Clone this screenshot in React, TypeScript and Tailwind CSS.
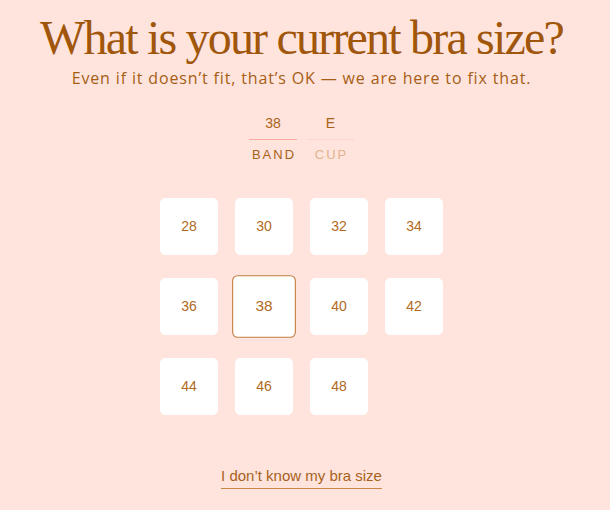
import React, { useState } from 'react';

const bands = [28, 30, 32, 34, 36, 38, 40, 42, 44, 46, 48];

export default function App() {
  const [band, setBand] = useState(38);
  const [tab, setTab] = useState<'band' | 'cup'>('band');

  return (
    <div className="min-h-[510px] w-full bg-[#ffe4de] pr-[7px] flex flex-col items-center font-['Liberation_Sans',Arial,sans-serif]">
      {/* Heading */}
      <h1 className="mt-[14px] text-[48px] leading-none tracking-[-1.8px] text-[#a0560b] font-['Liberation_Serif','Times_New_Roman',serif]">
        What is your current bra size?
      </h1>
      <p className="mt-[4px] text-[16px] leading-6 tracking-[0.85px] font-medium text-[#a65e14] font-['Open_Sans',Arial,sans-serif]">
        Even if it doesn’t fit, that’s OK — we are here to fix that.
      </p>

      {/* Band / cup tabs */}
      <div className="mt-[23px] flex gap-[10px]">
        <button
          type="button"
          onClick={() => setTab('band')}
          className="w-[48px] flex flex-col items-center"
        >
          <span className="w-full text-center text-[14px] leading-5 text-[#a86218] pb-[6px] border-b border-[#f6ab9b]">
            {band}
          </span>
          <span className={`mt-[5px] text-[13px] leading-5 tracking-[2px] pl-[2px] ${tab === 'band' ? 'text-[#a86218]' : 'text-[#e0b48c]'}`}>
            BAND
          </span>
        </button>
        <button
          type="button"
          onClick={() => setTab('cup')}
          className="w-[47px] flex flex-col items-center"
        >
          <span className="w-full text-center text-[14px] leading-5 text-[#a86218] pb-[6px] border-b border-[#fbd6cc]">
            E
          </span>
          <span className={`mt-[5px] text-[13px] leading-5 tracking-[2px] pl-[2px] ${tab === 'cup' ? 'text-[#a86218]' : 'text-[#e0b48c]'}`}>
            CUP
          </span>
        </button>
      </div>

      {/* Size grid */}
      <div className="mt-[33px] grid grid-cols-[repeat(4,58px)] auto-rows-[57px] gap-x-[17px] gap-y-[23px]">
        {bands.map((b) => (
          <button
            key={b}
            type="button"
            onClick={() => setBand(b)}
            className={`flex items-center justify-center rounded-[5px] bg-white text-[14px] text-[#b06a24] ${
              band === b ? 'scale-110 border-[1.5px] border-[#c27c3e]' : 'border-[1.5px] border-white'
            }`}
          >
            {b}
          </button>
        ))}
      </div>

      {/* Link */}
      <button
        type="button"
        className="mt-[51px] text-[15px] leading-5 text-[#a8621a] pb-[2px] border-b border-[#c98646]"
      >
        I don’t know my bra size
      </button>
    </div>
  );
}
